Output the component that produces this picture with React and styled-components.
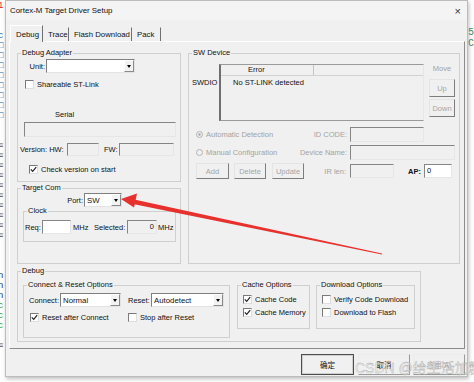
import React from "react";
import styled, { createGlobalStyle } from "styled-components";

const GlobalStyle = createGlobalStyle`
  html, body { margin: 0; padding: 0; background: #fff; }
  body {
    font-family: "Liberation Sans", Arial, sans-serif;
    font-size: 7.5px;
    color: #111;
  }
  * { box-sizing: border-box; }
`;

const Screen = styled.div`
  position: relative;
  width: 474px;
  height: 382px;
  overflow: hidden;
  display: flex;
  background: #fff;
`;

const EditorEdge = styled.div`
  width: 5px;
  display: flex;
  flex-direction: column;
  overflow: hidden;
  font-family: "Liberation Mono", monospace;
  font-size: 9px;
  line-height: 10px;
  padding-top: 1px;
`;

const EdgeGlyph = styled.span`
  height: 10px;
  margin-left: -2px;
  color: ${(p) => p.$c};
`;

const RightEdge = styled.div`
  width: 6px;
  padding-top: 27px;
  display: flex;
  flex-direction: column;
  font-family: "Liberation Mono", monospace;
  font-size: 10px;
  line-height: 11px;
  color: #3b8c6e;
  overflow: hidden;
`;

const Window = styled.div`
  width: 463px;
  height: 377px;
  display: flex;
  flex-direction: column;
  background: #f0f0f0;
  border: 1px solid #bcbcbc;
  box-shadow: 1px 2px 4px rgba(0, 0, 0, 0.25);
`;

const TitleBar = styled.div`
  height: 19px;
  display: flex;
  align-items: center;
  justify-content: space-between;
  padding: 0 6px 0 4px;
  background: #f4f4f4;
  font-size: 7.9px;
`;

const Close = styled.span`
  font-size: 11px;
  color: #333;
`;

const TabRow = styled.div`
  height: 21px;
  display: flex;
  align-items: flex-end;
  padding-left: 4px;
`;

const Tab = styled.div`
  width: ${(p) => p.$w}px;
  height: ${(p) => (p.$active ? 17 : 14)}px;
  padding-left: ${(p) => (p.$active ? 5 : 4)}px;
  display: flex;
  align-items: center;
  border-right: 1px solid #707070;
  border-top: 1px solid ${(p) => (p.$active ? "#fff" : "transparent")};
  border-left: 1px solid ${(p) => (p.$active ? "#fff" : "transparent")};
  background: #f0f0f0;
  margin-bottom: ${(p) => (p.$active ? -1 : 0)}px;
  position: relative;
  z-index: ${(p) => (p.$active ? 1 : 0)};
  font-size: 7.8px;
`;

const Panel = styled.div`
  margin-left: 3px;
  width: 456px;
  height: 308px;
  padding: 6px 0 0 7px;
  border: 1px solid;
  border-color: #fff #8c8c8c #8c8c8c #fff;
  display: grid;
  grid-template-columns: 164px 272px;
  grid-template-rows: 216px 76px;
  column-gap: 7px;
  row-gap: 2px;
`;

const Column = styled.div`
  display: flex;
  flex-direction: column;
  gap: 1px;
`;

const Group = styled.fieldset`
  margin: ${(p) => p.$m || 0};
  padding: 0;
  min-width: 0;
  width: ${(p) => (p.$w ? `${p.$w}px` : "auto")};
  height: ${(p) => p.$h}px;
  border: 1px solid #cfcfcf;
  overflow: hidden;
  grid-column: ${(p) => (p.$span ? "1 / -1" : "auto")};
`;

const Legend = styled.legend`
  padding: 0 1px;
  margin-left: 3px;
  line-height: 10px;
  font-size: 7.5px;
  color: #111;
`;

const Row = styled.div`
  display: flex;
  align-items: ${(p) => p.$align || "center"};
  height: ${(p) => p.$h}px;
  margin-top: ${(p) => p.$mt || 0}px;
  padding-left: ${(p) => p.$pl || 0}px;
  gap: ${(p) => p.$gap || 0}px;
  white-space: nowrap;
`;

const Label = styled.span`
  width: ${(p) => (p.$w ? `${p.$w}px` : "auto")};
  flex: none;
  text-align: ${(p) => p.$align || "left"};
  padding-left: ${(p) => p.$pl || 0}px;
  padding-right: ${(p) => p.$pr || 0}px;
  margin-left: ${(p) => p.$ml || 0}px;
  color: ${(p) => (p.$muted ? "#a3a3a3" : "#111")};
  font-weight: ${(p) => (p.$bold ? 700 : 400)};
  white-space: nowrap;
`;

const Field = styled.div`
  width: ${(p) => p.$w}px;
  height: ${(p) => p.$h || 14}px;
  flex: none;
  margin-left: ${(p) => p.$ml || 0}px;
  background: ${(p) => (p.$white ? "#fff" : "#f0f0f0")};
  border: 1px solid;
  border-color: #858585 #e6e6e6 #e6e6e6 #858585;
  text-align: ${(p) => (p.$right ? "right" : "left")};
  padding: 0 2px;
  line-height: 11px;
`;

const SelectBox = styled.div`
  width: ${(p) => p.$w}px;
  height: 14px;
  flex: none;
  display: flex;
  align-items: center;
  background: #fff;
  border: 1px solid;
  border-color: #7f7f7f #e3e3e3 #e3e3e3 #7f7f7f;
`;

const SelectValue = styled.span`
  flex: 1;
  padding-left: 2px;
  font-size: 7.8px;
  overflow: hidden;
`;

const SelectArrow = styled.span`
  width: 10px;
  height: 12px;
  display: flex;
  align-items: center;
  justify-content: center;
  background: #f2f2f2;
  border: 1px solid;
  border-color: #fff #8a8a8a #8a8a8a #fff;
  &::after {
    content: "";
    border-left: 2.5px solid transparent;
    border-right: 2.5px solid transparent;
    border-top: 3px solid #000;
  }
`;

const Select = ({ w, value }) => (
  <SelectBox $w={w}>
    <SelectValue>{value}</SelectValue>
    <SelectArrow />
  </SelectBox>
);

const BoxMark = styled.span`
  width: 9px;
  height: 9px;
  flex: none;
  margin-right: 3px;
  display: flex;
  align-items: center;
  justify-content: center;
  background: #fff;
  border: 1px solid;
  border-color: #7a7a7a #dedede #dedede #7a7a7a;
`;

const CheckItem = styled.div`
  display: flex;
  align-items: center;
  width: ${(p) => (p.$w ? `${p.$w}px` : "auto")};
  flex: none;
`;

const Check = ({ checked, label, w }) => (
  <CheckItem $w={w}>
    <BoxMark>
      {checked && (
        <svg width="7" height="7" viewBox="0 0 7 7">
          <path d="M0.8 3.4 L2.7 5.4 L6.2 1.2" fill="none" stroke="#222" strokeWidth="1.2" />
        </svg>
      )}
    </BoxMark>
    <span>{label}</span>
  </CheckItem>
);

const Radio = ({ on, label }) => (
  <CheckItem>
    <svg width="7" height="7" viewBox="0 0 7 7" style={{ marginRight: 3 }}>
      <circle cx="3.5" cy="3.5" r="3" fill="none" stroke="#b3b3b3" strokeWidth="1" />
      {on && <circle cx="3.5" cy="3.5" r="1.2" fill="#a5a5a5" />}
    </svg>
    <Label $muted>{label}</Label>
  </CheckItem>
);

const Btn = styled.div`
  width: ${(p) => p.$w}px;
  height: ${(p) => p.$h || 16}px;
  flex: none;
  display: flex;
  align-items: center;
  justify-content: center;
  background: #f0f0f0;
  border: 1px solid;
  border-color: #e4e4e4 #7d7d7d #7d7d7d #e4e4e4;
  color: ${(p) => (p.$disabled ? "#a6a6a6" : "#111")};
  margin-left: ${(p) => p.$ml || 0}px;
  margin-top: ${(p) => p.$mt || 0}px;
`;

const Table = styled.div`
  width: 205px;
  height: 57px;
  flex: none;
  background: #f0f0f0;
  border: 1px solid;
  border-color: #9a9a9a #e6e6e6 #9a9a9a #6f6f6f;
  border-left-width: 2px;
`;

const TableHead = styled.div`
  height: 11px;
  display: flex;
  border-bottom: 1px solid #d2d2d2;
`;

const HeadCell = styled.div`
  width: ${(p) => (p.$w ? `${p.$w}px` : "auto")};
  flex: ${(p) => (p.$w ? "none" : 1)};
  padding-left: 27px;
  line-height: 10px;
  border-right: ${(p) => (p.$w ? "1px solid #c4c4c4" : "none")};
`;

const TableRow = styled.div`
  margin-top: 2px;
  padding-left: 12px;
  line-height: 10px;
`;

const MoveCol = styled.div`
  width: 26px;
  margin-left: 5px;
  display: flex;
  flex-direction: column;
  align-items: center;
`;

const SwTop = styled.div`
  display: flex;
  height: 57px;
  margin-top: 6px;
`;

const SideLabel = styled.span`
  width: 30px;
  padding: 14px 0 0 3px;
  line-height: 10px;
`;

const OptionRow = styled.div`
  display: flex;
  align-items: flex-start;
  margin: 4px 0 0 5px;
  gap: 7px;
`;

const Footer = styled.div`
  display: flex;
  justify-content: flex-end;
  gap: 4px;
  margin-top: 5px;
  padding-right: 2px;
  font-family: "Noto Sans CJK SC", sans-serif;
  font-size: 7.5px;
`;

const FootBtn = styled(Btn)`
  border-color: ${(p) => (p.$default ? "#4d4d4d" : "#ececec #9a9a9a #9a9a9a #ececec")};
  box-shadow: ${(p) => (p.$default ? "inset 0 0 0 1px #cfcfcf" : "none")};
`;

const Overlay = styled.svg`
  position: absolute;
  inset: 0;
  pointer-events: none;
`;

const Watermark = styled.span`
  position: absolute;
  left: 355px;
  top: 360px;
  font-family: "Liberation Sans", "Noto Sans CJK SC", sans-serif;
  font-size: 14px;
  line-height: 17px;
  color: rgba(250, 250, 250, 0.7);
  -webkit-text-stroke: 0.35px rgba(140, 140, 140, 0.85);
  white-space: nowrap;
`;

const edge = [
  ["1", "#d23"], [" ", ""], [" ", ""],
  ["c", "#27c"], ["□", "#26a"], ["□", "#26a"], ["□", "#26a"], ["□", "#26a"], ["□", "#26a"],
  ["□", "#26a"], ["□", "#26a"], ["□", "#26a"], [" ", ""], [" ", ""],
  ["≡", "#555"], ["≡", "#555"], ["≡", "#555"], ["≡", "#555"], ["≡", "#555"], ["≡", "#555"],
  ["≡", "#555"], ["≡", "#555"], ["≡", "#555"], ["≡", "#555"], [" ", ""], [" ", ""], [" ", ""],
  ["n", "#235"], ["n", "#235"], ["n", "#235"], ["c", "#3a3"], ["c", "#3a3"], ["c", "#3a3"],
  [" ", ""], ["≡", "#555"],
];

export default function App() {
  return (
    <>
      <GlobalStyle />
      <Screen>
        <EditorEdge>
          {edge.map(([g, c], i) => (
            <EdgeGlyph key={i} $c={c}>{g}</EdgeGlyph>
          ))}
        </EditorEdge>

        <Window>
          <TitleBar>
            <span>Cortex-M Target Driver Setup</span>
            <Close>×</Close>
          </TitleBar>

          <TabRow>
            <Tab $w={33} $active>Debug</Tab>
            <Tab $w={26}>Trace</Tab>
            <Tab $w={63}>Flash Download</Tab>
            <Tab $w={29}>Pack</Tab>
          </TabRow>

          <Panel>
            <Column>
              <Group $h={134}>
                <Legend>Debug Adapter</Legend>
                <Row $h={14} $mt={1}>
                  <Label $w={28} $align="right" $pr={1}>Unit:</Label>
                  <Select w={89} value="" />
                </Row>
                <Row $h={16} $mt={3} $pl={7}>
                  <Check label="Shareable ST-Link" />
                </Row>
                <Row $h={14} $mt={15} $pl={37}>
                  <Label>Serial</Label>
                </Row>
                <Row $h={15} $mt={1} $pl={6}>
                  <Field $w={152} $h={15} />
                </Row>
                <Row $h={13} $mt={6} $pl={2}>
                  <Label $w={47}>Version: HW:</Label>
                  <Field $w={32} $h={13} />
                  <Label $w={20} $pl={5}>FW:</Label>
                  <Field $w={55} $h={13} />
                </Row>
                <Row $h={14} $mt={6} $pl={11}>
                  <Check checked label="Check version on start" />
                </Row>
              </Group>

              <Group $h={81}>
                <Legend>Target Com</Legend>
                <Row $h={14}>
                  <Label $w={66} $align="right" $pr={1}>Port:</Label>
                  <Select w={38} value="SW" />
                </Row>
                <Group $h={36} $w={153} $m="-1px 0 0 5px">
                  <Legend>Clock</Legend>
                  <Row $h={14} $mt={4} $pl={1}>
                    <Label $w={17}>Req:</Label>
                    <Field $w={29} $white />
                    <Label $w={21} $ml={2}>MHz</Label>
                    <Label $w={33}>Selected:</Label>
                    <Field $w={30} $right>0</Field>
                    <Label $ml={1}>MHz</Label>
                  </Row>
                </Group>
              </Group>
            </Column>

            <Group $h={216}>
              <Legend>SW Device</Legend>
              <SwTop>
                <SideLabel>SWDIO</SideLabel>
                <Table>
                  <TableHead>
                    <HeadCell $w={93}>Error</HeadCell>
                    <HeadCell />
                  </TableHead>
                  <TableRow>No ST-LINK detected</TableRow>
                </Table>
                <MoveCol>
                  <Label $muted style={{ lineHeight: "10px" }}>Move</Label>
                  <Btn $w={26} $h={18} $mt={5} $disabled>Up</Btn>
                  <Btn $w={26} $h={18} $mt={2} $disabled>Down</Btn>
                </MoveCol>
              </SwTop>
              <Row $h={15} $mt={6} $pl={7}>
                <Label $w={100}><Radio on label="Automatic Detection" /></Label>
                <Label $w={54} $align="right" $pr={3} $muted>ID CODE:</Label>
                <Field $w={74} $h={15} />
              </Row>
              <Row $h={15} $mt={3} $pl={7}>
                <Label $w={100}><Radio label="Manual Configuration" /></Label>
                <Label $w={54} $align="right" $pr={3} $muted>Device Name:</Label>
                <Field $w={105} $h={15} />
              </Row>
              <Row $h={16} $mt={3} $pl={7}>
                <Btn $w={33} $disabled>Add</Btn>
                <Btn $w={32} $ml={5} $disabled>Delete</Btn>
                <Btn $w={32} $ml={6} $disabled>Update</Btn>
                <Label $w={46} $align="right" $pr={4} $muted>IR len:</Label>
                <Field $w={44} />
                <Label $w={30} $align="right" $pr={3} $bold>AP:</Label>
                <Field $w={28} $white>0</Field>
              </Row>
            </Group>

            <Group $h={76} $w={404} $span>
              <Legend>Debug</Legend>
              <OptionRow>
                <Group $h={58} $w={207}>
                  <Legend>Connect &amp; Reset Options</Legend>
                  <Row $h={14} $mt={3} $pl={5}>
                    <Label $w={31}>Connect:</Label>
                    <Select w={61} value="Normal" />
                    <Label $w={23} $ml={7}>Reset:</Label>
                    <Select w={73} value="Autodetect" />
                  </Row>
                  <Row $h={14} $mt={3} $pl={6}>
                    <Check w={98} checked label="Reset after Connect" />
                    <Check label="Stop after Reset" />
                  </Row>
                </Group>
                <Group $h={49} $w={73}>
                  <Legend>Cache Options</Legend>
                  <Row $h={13} $mt={3} $pl={5}>
                    <Check checked label="Cache Code" />
                  </Row>
                  <Row $h={13} $pl={5}>
                    <Check checked label="Cache Memory" />
                  </Row>
                </Group>
                <Group $h={49} $w={99} style={{ marginLeft: -1 }}>
                  <Legend>Download Options</Legend>
                  <Row $h={13} $mt={3} $pl={5}>
                    <Check label="Verify Code Download" />
                  </Row>
                  <Row $h={13} $pl={5}>
                    <Check label="Download to Flash" />
                  </Row>
                </Group>
              </OptionRow>
            </Group>
          </Panel>

          <Footer>
            <FootBtn $w={53} $h={21} $default>确定</FootBtn>
            <FootBtn $w={52} $h={21}>取消</FootBtn>
            <FootBtn $w={52} $h={21} $disabled style={{ marginLeft: -1 }}>应用(A)</FootBtn>
          </Footer>
        </Window>

        <RightEdge>
          <span>5</span>
          <span>C</span>
        </RightEdge>

        <Overlay width="474" height="382" viewBox="0 0 474 382">
          <polygon points="121,199 137,193.5 134,207.5" fill="#e8302c" />
          <polygon points="133,199.2 133,204 382,254.6 382,253.6" fill="#e8302c" />
        </Overlay>
        <Watermark>CSDN @给生活加糖</Watermark>
      </Screen>
    </>
  );
}
